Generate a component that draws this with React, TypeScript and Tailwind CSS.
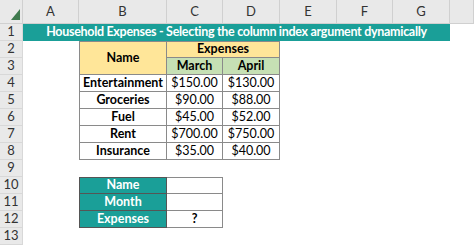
import React from 'react';

const cols = ['A', 'B', 'C', 'D', 'E', 'F', 'G', ''];

const rows = [
  { name: 'Entertainment', march: '$150.00', april: '$130.00' },
  { name: 'Groceries', march: '$90.00', april: '$88.00' },
  { name: 'Fuel', march: '$45.00', april: '$52.00' },
  { name: 'Rent', march: '$700.00', april: '$750.00' },
  { name: 'Insurance', march: '$35.00', april: '$40.00' },
];

const lookup = ['Name', 'Month', 'Expenses'];

export default function App() {
  return (
    <div
      className="w-[474px] h-[245px] overflow-hidden bg-white text-black"
      style={{ fontFamily: 'Lato, "Noto Sans", sans-serif' }}
    >
      <div className="grid grid-cols-[23px_56px_88px_56px_57px_57px_56px_57px_1fr] grid-rows-[24px_repeat(13,17px)] text-[12.5px]">
        {/* Corner */}
        <div className="col-start-1 row-start-1 bg-[#e9e9e9] border-r border-b border-[#d0d0d0] relative">
          <svg className="absolute right-[2px] bottom-[3px]" width="9" height="11" viewBox="0 0 9 11">
            <polygon points="9,0 9,11 0,11" fill="#3f7a4e" />
          </svg>
        </div>

        {/* Column letters */}
        {cols.map((c, i) => (
          <div
            key={'c' + i}
            className="row-start-1 bg-[#e9e9e9] border-r border-b border-[#d0d0d0] flex items-center justify-center text-[13px] text-[#333]"
            style={{ gridColumnStart: i + 2 }}
          >
            {c}
          </div>
        ))}

        {/* Row numbers */}
        {Array.from({ length: 13 }, (_, i) => (
          <div
            key={'r' + i}
            className="col-start-1 bg-[#e9e9e9] border-r border-b border-[#d8d8d8] flex items-center justify-center text-[13px] text-[#333]"
            style={{ gridRowStart: i + 2 }}
          >
            {i + 1}
          </div>
        ))}

        {/* Title banner */}
        <div className="col-start-2 col-span-7 row-start-2 bg-[#1a9f98] flex items-center justify-center text-white font-bold text-[12.5px] tracking-[-0.3px]">
          Household Expenses - Selecting the column index argument dynamically
        </div>

        {/* Table header */}
        <div className="col-start-3 row-start-3 row-span-2 bg-[#ffe699] border border-[#8a8a8a] flex items-center justify-center font-bold">
          Name
        </div>
        <div className="col-start-4 col-span-2 row-start-3 bg-[#ffe699] border-t border-r border-b border-[#8a8a8a] flex items-center justify-center font-bold">
          Expenses
        </div>
        <div className="col-start-4 row-start-4 bg-[#c6e0b4] border-r border-b border-[#8a8a8a] flex items-center justify-center font-bold">
          March
        </div>
        <div className="col-start-5 row-start-4 bg-[#c6e0b4] border-r border-b border-[#8a8a8a] flex items-center justify-center font-bold">
          April
        </div>

        {/* Table body */}
        {rows.map((r, i) => (
          <React.Fragment key={r.name}>
            <div
              className="col-start-3 border-l border-r border-b border-[#8a8a8a] flex items-center justify-center font-bold"
              style={{ gridRowStart: i + 5 }}
            >
              {r.name}
            </div>
            <div
              className="col-start-4 border-r border-b border-[#8a8a8a] flex items-center justify-center"
              style={{ gridRowStart: i + 5 }}
            >
              {r.march}
            </div>
            <div
              className="col-start-5 border-r border-b border-[#8a8a8a] flex items-center justify-center"
              style={{ gridRowStart: i + 5 }}
            >
              {r.april}
            </div>
          </React.Fragment>
        ))}

        {/* Lookup table */}
        {lookup.map((l, i) => (
          <React.Fragment key={l}>
            <div
              className={`col-start-3 bg-[#1a9f98] border-l border-r border-b border-[#555] flex items-center justify-center text-white font-bold ${i === 0 ? 'border-t' : ''}`}
              style={{ gridRowStart: i + 11 }}
            >
              {l}
            </div>
            <div
              className={`col-start-4 border-r border-b border-[#8a8a8a] flex items-center justify-center font-bold ${i === 0 ? 'border-t' : ''}`}
              style={{ gridRowStart: i + 11 }}
            >
              {i === 2 ? '?' : ''}
            </div>
          </React.Fragment>
        ))}
      </div>
    </div>
  );
}
